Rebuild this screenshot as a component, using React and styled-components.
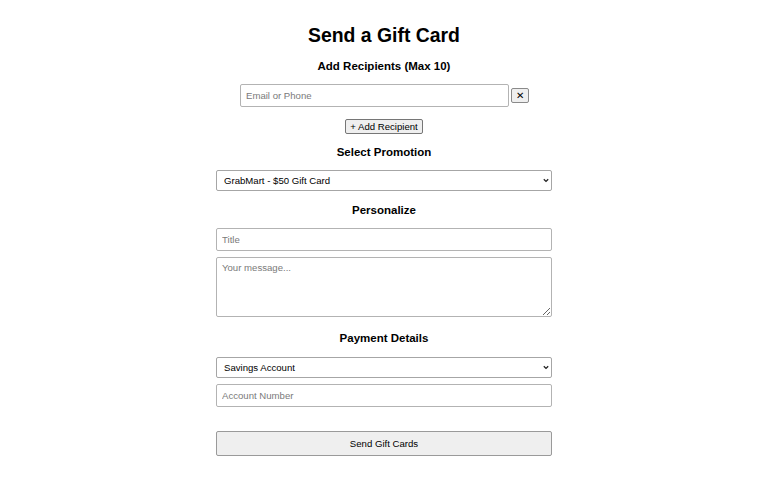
import React, { useState } from "react"
import styled, { createGlobalStyle } from "styled-components"

const GlobalStyle = createGlobalStyle`
  body {
    margin: 0;
    background: #fff;
    font-family: "Liberation Sans", Arial, sans-serif;
    color: #000;
  }
`

const Page = styled.div`
  width: 336px;
  margin: 0 auto;
  padding-top: 24px;
  display: flex;
  flex-direction: column;
  align-items: stretch;
`

const Title = styled.h1`
  margin: 0;
  font-size: 19.4px;
  line-height: 23px;
  font-weight: bold;
  text-align: center;
`

const SectionTitle = styled.h3`
  margin: ${(p) => p.$top || 12}px 0 ${(p) => p.$bottom || 11}px;
  font-size: 11.5px;
  line-height: 14px;
  font-weight: bold;
  text-align: center;
`

const RecipientRow = styled.div`
  display: flex;
  justify-content: center;
  align-items: center;
  gap: 2px;
  padding-left: 1px;
`

const Field = styled.input`
  box-sizing: border-box;
  width: ${(p) => p.$width || "100%"};
  height: 23px;
  margin-top: ${(p) => p.$top || 0}px;
  padding: 0 5px;
  font-family: inherit;
  font-size: 9.6px;
  border: 1px solid #b3b3b3;
  border-radius: 2px;
  outline: none;

  &::placeholder {
    color: #7a7a7a;
  }
`

const Message = styled.textarea`
  box-sizing: border-box;
  width: 100%;
  height: 60px;
  margin-top: 6px;
  padding: 4px 5px;
  font-family: inherit;
  font-size: 9.6px;
  border: 1px solid #b3b3b3;
  border-radius: 2px;
  resize: vertical;
  display: block;

  &::placeholder {
    color: #7a7a7a;
  }
`

const SelectWrap = styled.div`
  position: relative;
  height: 21px;
`

const Select = styled.select`
  box-sizing: border-box;
  appearance: none;
  width: 100%;
  height: 21px;
  padding: 0 16px 0 7px;
  font-family: inherit;
  font-size: 9.6px;
  color: #000;
  background: #fff;
  border: 1px solid #a6a6a6;
  border-radius: 2px;
  outline: none;
`

const Chevron = styled.svg`
  position: absolute;
  right: 3px;
  top: 8px;
  width: 6px;
  height: 5px;
  pointer-events: none;
`

const SmallButton = styled.button`
  box-sizing: border-box;
  height: 15px;
  padding: 0 ${(p) => p.$pad || 4}px;
  font-family: inherit;
  font-size: 9.6px;
  line-height: 1;
  background: #efefef;
  border: 1px solid ${(p) => p.$border || "#767676"};
  border-radius: 2px;
  color: #000;
  cursor: pointer;
`

const AddWrap = styled.div`
  display: flex;
  justify-content: center;
  margin-top: 12px;
`

const SendButton = styled.button`
  box-sizing: border-box;
  width: 100%;
  height: 25px;
  margin-top: 24px;
  font-family: inherit;
  font-size: 9.6px;
  background: #efefef;
  border: 1px solid #9a9a9a;
  border-radius: 2px;
  color: #000;
  cursor: pointer;
`

const Dropdown = ({ children, defaultValue }) => (
  <SelectWrap>
    <Select defaultValue={defaultValue}>{children}</Select>
    <Chevron viewBox="0 0 6 5">
      <path d="M0.8 1.2 L3 3.4 L5.2 1.2" fill="none" stroke="#222" strokeWidth="1.3" />
    </Chevron>
  </SelectWrap>
)

const App = () => {
  const [recipients, setRecipients] = useState([""])

  return (
    <>
      <GlobalStyle />
      <Page>
        <Title>Send a Gift Card</Title>
        <SectionTitle $top={12} $bottom={11}>Add Recipients (Max 10)</SectionTitle>
        {recipients.map((r, i) => (
          <RecipientRow key={i}>
            <Field
              $width="269px"
              placeholder="Email or Phone"
              value={r}
              onChange={(e) => {
                const next = [...recipients]
                next[i] = e.target.value
                setRecipients(next)
              }}
            />
            <SmallButton $pad={4} $border="#8a8a8a">✕</SmallButton>
          </RecipientRow>
        ))}
        <AddWrap>
          <SmallButton>+ Add Recipient</SmallButton>
        </AddWrap>
        <SectionTitle $top={11} $bottom={11}>Select Promotion</SectionTitle>
        <Dropdown defaultValue="grabmart">
          <option value="grabmart">GrabMart - $50 Gift Card</option>
        </Dropdown>
        <SectionTitle $top={12} $bottom={11}>Personalize</SectionTitle>
        <Field placeholder="Title" />
        <Message placeholder="Your message..." />
        <SectionTitle $top={14} $bottom={12}>Payment Details</SectionTitle>
        <Dropdown defaultValue="savings">
          <option value="savings">Savings Account</option>
        </Dropdown>
        <Field $top={6} placeholder="Account Number" />
        <SendButton>Send Gift Cards</SendButton>
      </Page>
    </>
  )
}

export default App
